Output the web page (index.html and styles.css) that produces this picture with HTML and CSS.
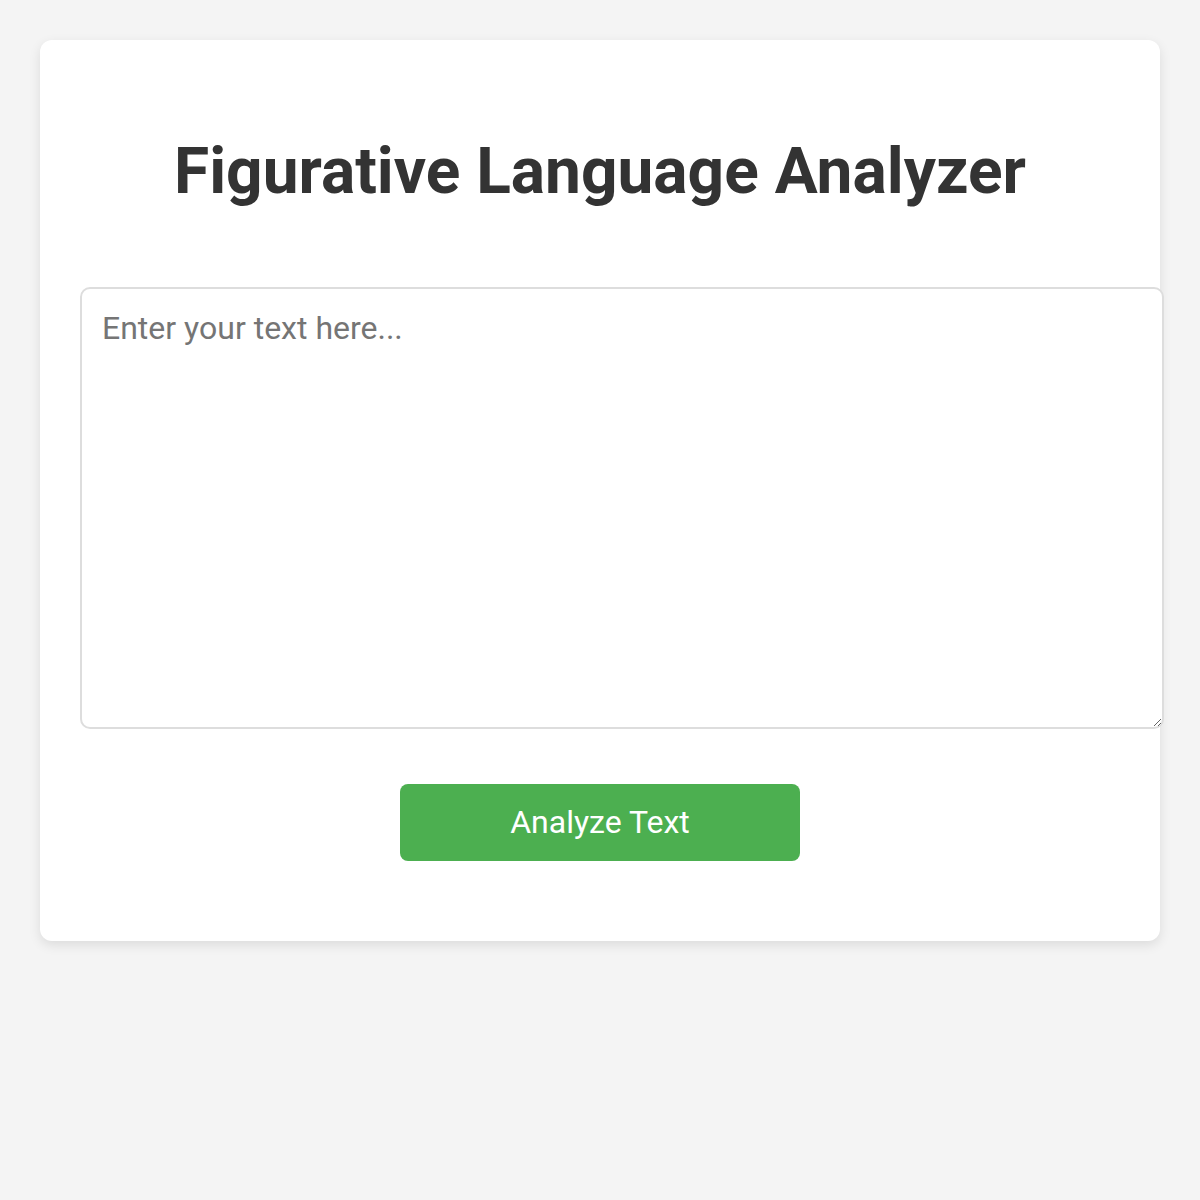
FILE: index.html
```html
<!doctype html>
<html>
	<head>
		<meta charset="utf-8">
		<title>Figurative Language Analyzer</title>
		<link rel="stylesheet" href="styles.css">
	</head>
	<body>
		<div class="container">
			<h1 class="title">Figurative Language Analyzer</h1>
			<textarea class="input-text" placeholder="Enter your text here..."></textarea>
			<button class="analyze-btn">Analyze Text</button>
		</div>
	</body>
</html>
```

FILE: styles.css
```css
html, body {
	margin: 0;
	background: #f4f4f4;
	font-family: Roboto, "Liberation Sans", sans-serif;
}
body {
	padding: 40px;
}
.container {
	display: flex;
	flex-direction: column;
	align-items: flex-start;
	background: #fff;
	border-radius: 12px;
	box-shadow: 0 4px 12px rgba(0, 0, 0, 0.1);
	padding: 40px;
}
.title {
	align-self: stretch;
	margin: 54px 0 76px;
	font-size: 64px;
	font-weight: 700;
	line-height: 1.2;
	text-align: center;
	color: #333;
}
.input-text {
	display: block;
	width: 100%;
	height: 398px;
	margin: 0;
	padding: 20px;
	border: 2px solid #ddd;
	border-radius: 10px;
	font-family: Roboto, "Liberation Sans", sans-serif;
	font-size: 32px;
	color: #333;
}
.input-text::placeholder {
	color: #757575;
}
.analyze-btn {
	align-self: center;
	width: 400px;
	height: 77px;
	margin: 55px 0 40px;
	border: none;
	border-radius: 8px;
	background: #4caf50;
	color: #fff;
	font-family: Roboto, "Liberation Sans", sans-serif;
	font-size: 32px;
	cursor: pointer;
}
```
